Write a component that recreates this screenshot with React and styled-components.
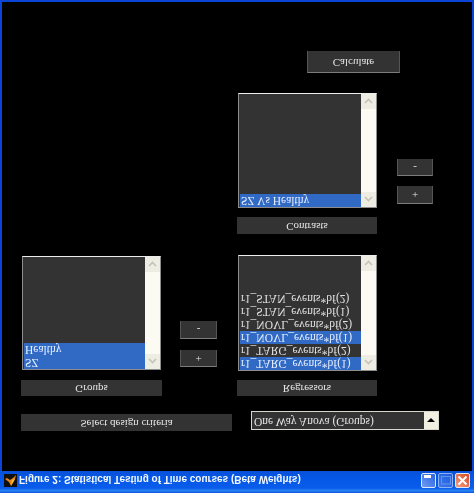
import React from "react";
import styled, { createGlobalStyle } from "styled-components";

const Global = createGlobalStyle`
  html, body { margin: 0; padding: 0; background: #000; }
`;

const Window = styled.div`
  width: 474px;
  height: 493px;
  display: flex;
  flex-direction: column;
  background: #000;
  overflow: hidden;
  transform: scaleY(-1);
  filter: blur(0.35px);
  font-family: "Liberation Serif", serif;
  color: #e6e6e6;
`;

const TitleBar = styled.div`
  height: 22px;
  flex: none;
  display: flex;
  align-items: center;
  padding: 3px 4px 0 4px;
  background: linear-gradient(180deg, #0a4fd6 0%, #2a86f5 10%, #0a5cea 22%, #0457e6 70%, #0a50d8 100%);
  box-sizing: border-box;
`;

const AppIcon = styled.svg`
  width: 13px;
  height: 13px;
  flex: none;
`;

const TitleText = styled.span`
  margin-left: 2px;
  flex: 1;
  font: bold 10px "Liberation Sans", sans-serif;
  color: #f4f8ff;
  white-space: nowrap;
  padding-top: 2px;
`;

const WinButton = styled.div`
  width: 15px;
  height: 15px;
  margin-left: 2px;
  box-sizing: border-box;
  border: 1px solid #dfe8fb;
  border-radius: 2px;
  display: flex;
  align-items: ${(p) => (p.$align || "center")};
  justify-content: center;
  background: ${(p) => p.$bg};
  opacity: ${(p) => p.$fade || 1};
`;

const Client = styled.div`
  flex: 1;
  box-sizing: border-box;
  border: solid #0a45d8;
  border-width: 0 2px 2px 2px;
  padding: 40px 0 0 19px;
  background: #000;
`;

const CriteriaRow = styled.div`
  display: flex;
  align-items: flex-start;
  gap: 19px;
`;

const Label = styled.div`
  width: ${(p) => p.$w || 140}px;
  height: ${(p) => p.$h || 16}px;
  flex: none;
  box-sizing: border-box;
  padding-bottom: 3px;
  background: #333;
  font-size: 11px;
  display: flex;
  align-items: center;
  justify-content: center;
`;

const Dropdown = styled.div`
  width: 188px;
  height: 19px;
  margin-top: 1px;
  box-sizing: border-box;
  border: 1px solid #d8d8d0;
  background: #333;
  display: flex;
  align-items: center;
  font-size: 11.5px;
  padding-left: 2px;
`;

const DropValue = styled.span`
  flex: 1;
  white-space: nowrap;
  padding-bottom: 3px;
`;

const DropArrow = styled.div`
  width: 14px;
  height: 17px;
  background: #f1efe2;
  display: flex;
  align-items: center;
  justify-content: center;
`;

const Triangle = styled.div`
  width: 0;
  height: 0;
  border: 4px solid transparent;
  border-bottom: 0;
  border-top: 4px solid #000;
`;

const DesignRow = styled.div`
  display: flex;
  margin-top: 15px;
`;

const RowSpacer = styled.div`
  width: 20px;
  flex: none;
`;

const ContrastRow = styled.div`
  display: flex;
  margin: 21px 0 0 216px;
`;

const Group = styled.div`
  display: flex;
  flex-direction: column;
  width: ${(p) => p.$w || 140}px;
  flex: none;
`;

const ListBox = styled.div`
  width: 139px;
  height: ${(p) => p.$h}px;
  margin-top: ${(p) => p.$gap}px;
  margin-left: 1px;
  box-sizing: border-box;
  border: 1px solid #8d8d8d;
  border-bottom-color: #eee;
  background: #333;
  display: flex;
`;

const Items = styled.div`
  flex: 1;
  padding-left: 1px;
  min-width: 0;
`;

const Item = styled.div`
  height: 13px;
  line-height: 13px;
  font-size: 11.5px;
  padding-left: 1px;
  white-space: nowrap;
  background: ${(p) => (p.$selected ? "#316ac5" : "transparent")};
  color: ${(p) => (p.$selected ? "#e8f0ff" : "#e2e2e2")};
`;

const ScrollBar = styled.div`
  width: 15px;
  flex: none;
  display: flex;
  flex-direction: column;
  justify-content: space-between;
  background: #fbfaf3;
`;

const ScrollButton = styled.div`
  height: 15px;
  background: #eeede3;
  display: flex;
  align-items: center;
  justify-content: center;
`;

const Chevron = styled.svg`
  width: 9px;
  height: 6px;
`;

const Stepper = styled.div`
  width: ${(p) => p.$w}px;
  margin: ${(p) => p.$top}px 0 0 ${(p) => p.$left}px;
  flex: none;
  display: flex;
  flex-direction: column;
  gap: ${(p) => p.$gap}px;
`;

const PushButton = styled.div`
  height: ${(p) => p.$h}px;
  width: ${(p) => (p.$w ? `${p.$w}px` : "auto")};
  box-sizing: border-box;
  padding-bottom: ${(p) => p.$lift || 2}px;
  background: #333;
  border-top: 1px solid #7c7c7c;
  border-left: 1px solid #555;
  border-right: 1px solid #555;
  font-size: 11px;
  display: flex;
  align-items: center;
  justify-content: center;
`;

const CalcRow = styled.div`
  margin: 20px 0 0 286px;
`;

const ScrollColumn = () => (
  <ScrollBar>
    <ScrollButton>
      <Chevron viewBox="0 0 9 6">
        <path d="M1 5 L4.5 1.5 L8 5" fill="none" stroke="#c4c3b4" strokeWidth="1.6" />
      </Chevron>
    </ScrollButton>
    <ScrollButton>
      <Chevron viewBox="0 0 9 6">
        <path d="M1 1 L4.5 4.5 L8 1" fill="none" stroke="#c4c3b4" strokeWidth="1.6" />
      </Chevron>
    </ScrollButton>
  </ScrollBar>
);

const ListGroup = ({ title, items, height, gap, labelHeight, width }) => (
  <Group $w={width}>
    <Label $w={width} $h={labelHeight}>{title}</Label>
    <ListBox $h={height} $gap={gap}>
      <Items>
        {items.map(([text, selected]) => (
          <Item key={text} $selected={selected}>{text}</Item>
        ))}
      </Items>
      <ScrollColumn />
    </ListBox>
  </Group>
);

const regressors = [
  ["r1_TARG_events*bf(1)", true],
  ["r1_TARG_events*bf(2)", false],
  ["r1_NOVL_events*bf(1)", true],
  ["r1_NOVL_events*bf(2)", false],
  ["r1_STAN_events*bf(1)", false],
  ["r1_STAN_events*bf(2)", false],
];

export default function App() {
  return (
    <>
      <Global />
      <Window>
        <TitleBar>
          <AppIcon viewBox="0 0 13 13">
            <rect width="13" height="13" fill="#101010" />
            <path d="M1 8 L5 5 L7 1 L11 8 L12 12 L9 9 L6 7 L3 9 Z" fill="#e8861a" />
            <path d="M7 1 L11 8 L8 7 Z" fill="#f4c23a" />
          </AppIcon>
          <TitleText>Figure 2: Statistical Testing of Time courses (Beta Weights)</TitleText>
          <WinButton $bg="linear-gradient(135deg,#6f9cf5,#2a62dc)" $align="flex-end">
            <svg width="9" height="11" viewBox="0 0 9 11"><rect x="0" y="7" width="7" height="3" fill="#fff" /></svg>
          </WinButton>
          <WinButton $bg="linear-gradient(135deg,#5d8cf0,#2d62d8)" $fade="0.62">
            <svg width="10" height="9" viewBox="0 0 10 9"><rect x="0.5" y="1" width="9" height="7.5" fill="none" stroke="#9db8f2" /></svg>
          </WinButton>
          <WinButton $bg="linear-gradient(135deg,#f0a084,#d8481f)">
            <svg width="11" height="11" viewBox="0 0 11 11"><path d="M1.5 1.5 L9.5 9.5 M9.5 1.5 L1.5 9.5" stroke="#fff" strokeWidth="2" /></svg>
          </WinButton>
        </TitleBar>
        <Client>
          <CriteriaRow>
            <Label $w={211} $h={17}>Select design criteria</Label>
            <Dropdown>
              <DropValue>One Way Anova (Groups)</DropValue>
              <DropArrow><Triangle /></DropArrow>
            </Dropdown>
          </CriteriaRow>
          <DesignRow>
            <ListGroup title="Groups" width={141} height={114} gap={10} items={[["SZ", true], ["Healthy", true]]} />
            <Stepper $w={37} $left={18} $top={29} $gap={11}>
              <PushButton $h={17}>+</PushButton>
              <PushButton $h={18}>-</PushButton>
            </Stepper>
            <RowSpacer />
            <ListGroup title="Regressors" height={116} gap={9} items={regressors} />
          </DesignRow>
          <ContrastRow>
            <ListGroup title="Contrasts" height={115} gap={9} labelHeight={17} items={[["SZ Vs Healthy", true]]} />
            <Stepper $w={36} $left={20} $top={30} $gap={10}>
              <PushButton $h={18}>+</PushButton>
              <PushButton $h={17}>-</PushButton>
            </Stepper>
          </ContrastRow>
          <CalcRow>
            <PushButton $w={93} $h={22} $lift={3}>Calculate</PushButton>
          </CalcRow>
        </Client>
      </Window>
    </>
  );
}
